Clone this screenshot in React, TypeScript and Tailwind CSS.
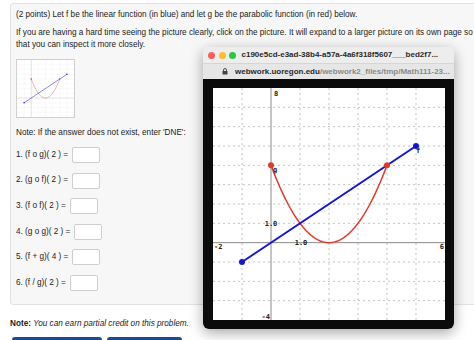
import React from 'react'

const W = 232
const H = 232
const px = (x: number) => (x + 2) * (W / 8)
const py = (y: number) => (8 - y) * (H / 12)

const parabola = Array.from({ length: 41 }, (_, i) => {
  const x = i / 10
  return `${px(x).toFixed(2)},${py((x - 2) * (x - 2)).toFixed(2)}`
}).join(' ')

function Plot({ size, labels }: { size: number; labels?: boolean }) {
  const xs = [-1, 1, 2, 3, 4, 5]
  const ys = [-3, -2, -1, 1, 2, 3, 4, 5, 6, 7]
  return (
    <svg width={size} height={size} viewBox={`0 0 ${W} ${H}`} className="block bg-white">
      {xs.map(x => (
        <line key={'vx' + x} x1={px(x)} y1={0} x2={px(x)} y2={H} stroke="#c4c4c4" strokeWidth={1} strokeDasharray="2 3" />
      ))}
      {ys.map(y => (
        <line key={'hy' + y} x1={0} y1={py(y)} x2={W} y2={py(y)} stroke="#c4c4c4" strokeWidth={1} strokeDasharray="2 3" />
      ))}
      <line x1={px(0)} y1={0} x2={px(0)} y2={H} stroke="#8a8a8a" strokeWidth={1} />
      <line x1={0} y1={py(0)} x2={W} y2={py(0)} stroke="#8a8a8a" strokeWidth={1} />
      <polyline points={parabola} fill="none" stroke="#e23b2c" strokeWidth={1.5} />
      <line x1={px(-1)} y1={py(-1)} x2={px(5)} y2={py(5)} stroke="#1414d8" strokeWidth={2} />
      <circle cx={px(0)} cy={py(4)} r={3} fill="#e23b2c" />
      <circle cx={px(4)} cy={py(4)} r={3} fill="#e23b2c" />
      <circle cx={px(-1)} cy={py(-1)} r={3} fill="#1414d8" />
      <circle cx={px(5)} cy={py(5)} r={3} fill="#1414d8" />
      {labels && (
        <g fontFamily="'DejaVu Sans Mono', monospace" fontWeight="bold" fontSize={7} fill="#222">
          <text x={61} y={8}>8</text>
          <text x={60} y={84}>g</text>
          <text x={203} y={65}>f</text>
          <text x={58} y={138} textAnchor="middle">1.0</text>
          <text x={88} y={157} textAnchor="middle">1.0</text>
          <text x={1} y={161}>-2</text>
          <text x={231} y={161} textAnchor="end">6</text>
          <text x={57} y={231} textAnchor="end">-4</text>
        </g>
      )}
    </svg>
  )
}

const rows = [
  '1. (f o g)( 2 ) =',
  '2. (g o f)( 2 ) =',
  '3. (f o f)( 2 ) =',
  '4. (g o g)( 2 ) =',
  '5. (f + g)( 4 ) =',
  '6. (f / g)( 2 ) =',
]

export default function App() {
  return (
    <div className="relative h-[340px] w-[474px] overflow-hidden bg-white font-['Liberation_Sans',Arial,sans-serif] text-[8.2px] text-[#1c1c1c]">
      <div className="ml-[10px] mt-[3px] h-[302px] w-[500px] rounded-[3px] border border-[#e2e2e2] bg-[#f7f7f7] pl-[5px] pt-[6px]">
        <p className="whitespace-nowrap leading-[10px]">
          (2 points) Let f be the linear function (in blue) and let g be the parabolic function (in red) below.
        </p>
        <p className="mt-[7px] whitespace-nowrap leading-[12px]">
          If you are having a hard time seeing the picture clearly, click on the picture. It will expand to a larger picture on its own page so
          <br />
          that you can inspect it more closely.
        </p>
        <div className="mt-[8px] w-[59px] border border-[#d0d0d0] bg-white">
          <Plot size={57} />
        </div>
        <p className="mt-[10px] leading-[10px]">Note: If the answer does not exist, enter 'DNE':</p>
        <div className="mt-[9px] flex flex-col gap-[9.6px]">
          {rows.map(r => (
            <div key={r} className="flex h-[16px] items-center gap-[4px]">
              <span className="whitespace-nowrap">{r}</span>
              <div className="h-[16px] w-[28px] rounded-[2px] border border-[#cfcfcf] bg-white" />
            </div>
          ))}
        </div>
      </div>

      <p className="ml-[10px] mt-[14px] leading-[10px]">
        <span className="font-bold">Note:</span> <i>You can earn partial credit on this problem.</i>
      </p>
      <div className="ml-[12px] mt-[8px] flex gap-[5px]">
        <div className="h-[20px] w-[90px] rounded-[3px] bg-[#1d4a8e]" />
        <div className="h-[20px] w-[75px] rounded-[3px] bg-[#1d4a8e]" />
      </div>

      {/* popup window with the enlarged picture */}
      <div className="absolute left-[203px] top-[47px] w-[251px] overflow-hidden rounded-[6px] shadow-[0_4px_14px_rgba(0,0,0,0.35)]">
        <div className="flex h-[16px] items-center bg-[#ededed] pl-[5px]">
          <span className="h-[7px] w-[7px] rounded-full bg-[#fe5f57]" />
          <span className="ml-[3.5px] h-[7px] w-[7px] rounded-full bg-[#febc2e]" />
          <span className="ml-[3.5px] h-[7px] w-[7px] rounded-full bg-[#28c840]" />
          <span className="ml-[5.5px] whitespace-nowrap text-[8px] font-semibold text-[#2a2a2a]">
            c190e5cd-e3ad-38b4-a57a-4a6f318f5607___bed2f7...
          </span>
        </div>
        <div className="flex h-[16px] items-center border-t border-[#d6d6d6] bg-[#e6e6e6] pl-[19px]">
          <svg width="6" height="7" viewBox="0 0 6 7" className="shrink-0">
            <path d="M1.5 3V2a1.5 1.5 0 0 1 3 0v1" fill="none" stroke="#444" strokeWidth="0.9" />
            <rect x="0.5" y="3" width="5" height="3.6" rx="0.5" fill="#444" />
          </svg>
          <span className="ml-[7px] whitespace-nowrap text-[8px] font-semibold text-[#8a8a8a]">
            <span className="text-[#2a2a2a]">webwork.uoregon.edu</span>/webwork2_files/tmp/Math111-23...
          </span>
        </div>
        <div className="h-[250px] bg-[#0b0b0b] pl-[10px] pt-[9px]">
          <Plot size={232} labels />
        </div>
      </div>
    </div>
  )
}
